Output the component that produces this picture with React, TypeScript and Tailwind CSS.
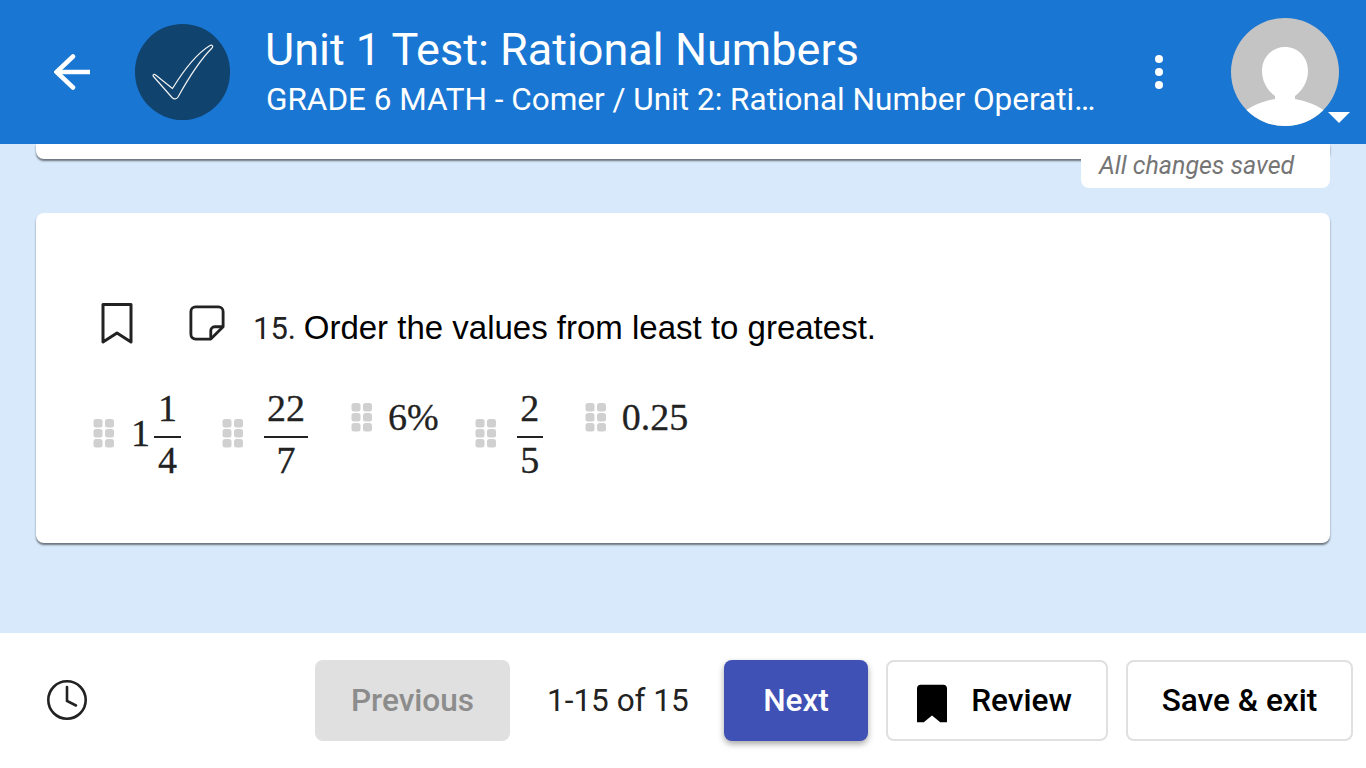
import { ReactNode } from 'react'

function Grip() {
  return (
    <svg width="22" height="29" viewBox="0 0 22 29" fill="#d0d0d0" className="shrink-0">
      <rect x="0.5" y="0" width="9" height="8.5" rx="2.5" />
      <rect x="12" y="0" width="9" height="8.5" rx="2.5" />
      <rect x="0.5" y="10" width="9" height="8.5" rx="2.5" />
      <rect x="12" y="10" width="9" height="8.5" rx="2.5" />
      <rect x="0.5" y="20" width="9" height="8.5" rx="2.5" />
      <rect x="12" y="20" width="9" height="8.5" rx="2.5" />
    </svg>
  )
}

function Fraction({ top, bottom, width }: { top: string; bottom: string; width: string }) {
  return (
    <span className={`flex h-[82px] flex-col items-center ${width}`}>
      <span className="h-[44px] leading-[32px]">{top}</span>
      <span className="h-[2px] w-full shrink-0 bg-[#222222]" />
      <span className="h-[36px] leading-[44px]">{bottom}</span>
    </span>
  )
}

function Option({ children, className }: { children: ReactNode; className: string }) {
  return <div className={`flex items-center ${className}`}>{children}</div>
}

function FooterButton({ children, className }: { children: ReactNode; className: string }) {
  return (
    <button className={`flex h-[81px] items-center justify-center rounded-[8px] text-[31.6px] font-medium ${className}`}>
      {children}
    </button>
  )
}

export default function App() {
  return (
    <div className="relative flex h-screen flex-col overflow-hidden bg-[#d7e9fb] font-['Roboto',sans-serif]">
      <header className="z-10 flex h-[144px] shrink-0 items-center bg-[#1976d2] text-white">
        <svg width="36" height="36" viewBox="0 0 36 36" fill="none" stroke="white" strokeWidth="4.5" className="ml-[54px] shrink-0">
          <path d="M36 18H4" />
          <path d="M19 2.500 2.500 18 19 33.500" strokeLinecap="round" />
        </svg>
        <div className="ml-[45px] flex h-[96px] w-[95px] shrink-0 items-center justify-center rounded-full bg-[#10436e]">
          <svg width="62" height="58" viewBox="0 0 62 58" fill="none" stroke="#f2f2f2" strokeWidth="1.2">
            <path d="M1.500 33.500c-1-1 0-2.800 1.500-2L20.500 45.500C30 30 44 11 58 2.500c2-1 3.500.5 2 2.500C47 18 36 36 26 54c-1.500 2.500-4 2.500-6 .5Z" strokeLinejoin="round" />
          </svg>
        </div>
        <div className="ml-[36px] w-[830px] shrink-0">
          <h1 className="-ml-[1px] text-[45px] leading-[50px]">Unit 1 Test: Rational Numbers</h1>
          <p className="mt-[5px] whitespace-nowrap text-[31.5px] leading-[40px]">GRADE 6 MATH - Comer / Unit 2: Rational Number Operati…</p>
        </div>
        <div className="ml-[59px] flex w-[13px] shrink-0 flex-col gap-[5px]">
          <span className="h-[8px] w-[8px] rounded-full bg-white" />
          <span className="h-[8px] w-[8px] rounded-full bg-white" />
          <span className="h-[8px] w-[8px] rounded-full bg-white" />
        </div>
        <div className="relative ml-[63px] h-[108px] w-[108px] shrink-0">
          <svg width="108" height="108" viewBox="0 0 108 108" className="rounded-full bg-[#c4c4c4]">
            <path d="M54 29c13 0 23 10 23 24 0 11-6 20-13 25v3c12 2 24 7 31 13a54 54 0 0 1-82 0c7-6 19-11 31-13v-3c-7-5-13-14-13-25 0-14 10-24 23-24Z" fill="white" />
          </svg>
          <span className="absolute left-[97px] top-[94px] h-0 w-0 border-x-[11px] border-t-[11px] border-x-transparent border-t-white" />
        </div>
      </header>

      <main className="flex-1 overflow-hidden px-[36px]">
        <div className="h-[15px] rounded-b-[8px] bg-white shadow-[0_2px_2px_rgba(0,0,0,0.5)]" />
        <section className="mt-[54px] h-[330px] rounded-[8px] bg-white px-[57px] pt-[90px] shadow-[0_2px_2px_rgba(0,0,0,0.5)]">
          <div className="flex h-[40px] items-center">
            <svg width="32" height="42" viewBox="0 0 32 42" fill="none" stroke="#222222" strokeWidth="3" strokeLinejoin="round" className="ml-[8px] shrink-0">
              <path d="M2 2.500h28V40L16 31 2 40Z" />
            </svg>
            <svg width="36" height="36" viewBox="0 0 38 38" fill="none" stroke="#222222" strokeWidth="3" strokeLinejoin="round" className="ml-[56px] shrink-0">
              <path d="M7 2h24a5 5 0 0 1 5 5v16L23 36H7a5 5 0 0 1-5-5V7a5 5 0 0 1 5-5Z" />
              <path d="M23 36V27a4 4 0 0 1 4-4h9" />
            </svg>
            <p className="ml-[28px] mt-[10px] whitespace-nowrap text-[31px] leading-[40px] text-[#222222]">
              15. <span className="font-['Liberation_Sans',sans-serif] text-[33px] text-black">Order the values from least to greatest.</span>
            </p>
          </div>
          <div className="mt-[49px] flex items-start font-['Liberation_Serif',serif] text-[38px] text-[#222222] [-webkit-text-stroke:0.3px_#222222]">
            <Option className="h-[82px]">
              <Grip />
              <span className="ml-[16px]">1</span>
              <span className="ml-[4px]">
                <Fraction top="1" bottom="4" width="w-[27px]" />
              </span>
            </Option>
            <Option className="ml-[41px] h-[82px]">
              <Grip />
              <span className="ml-[20px]">
                <Fraction top="22" bottom="7" width="w-[44px]" />
              </span>
            </Option>
            <Option className="ml-[43px] h-[50px]">
              <Grip />
              <span className="ml-[15px] leading-[48px]">6%</span>
            </Option>
            <Option className="ml-[36px] h-[82px]">
              <Grip />
              <span className="ml-[20px]">
                <Fraction top="2" bottom="5" width="w-[26px]" />
              </span>
            </Option>
            <Option className="ml-[42px] h-[50px]">
              <Grip />
              <span className="ml-[15px] leading-[48px]">0.25</span>
            </Option>
          </div>
        </section>
      </main>

      <div className="absolute left-[1081px] top-[144px] flex h-[44px] w-[249px] items-center rounded-b-[8px] bg-white pl-[18px] text-[25px] italic text-[#757575]">
        All changes saved
      </div>

      <footer className="flex h-[135px] shrink-0 items-center bg-white pl-[47px]">
        <svg width="40" height="40" viewBox="0 0 40 40" fill="none" stroke="#222222" strokeWidth="2.6" strokeLinecap="round" className="mb-[2px] mr-[1px] shrink-0">
          <circle cx="20" cy="20" r="18.700" />
          <path d="M20 7v14l9 4.500" />
        </svg>
        <FooterButton className="ml-[227px] w-[195px] bg-[#e0e0e0] text-[#8c8c8c]">Previous</FooterButton>
        <span className="ml-[37px] w-[141px] shrink-0 whitespace-nowrap text-[31.5px] text-[#222222]">1-15 of 15</span>
        <FooterButton className="ml-[36px] w-[144px] bg-[#3f51b5] text-white shadow-[0_3px_6px_rgba(0,0,0,0.35)]">Next</FooterButton>
        <FooterButton className="ml-[18px] w-[222px] gap-[24px] border-2 border-[#e0e0e0] bg-white pr-[5px] text-black">
          <svg width="30" height="39" viewBox="0 0 31 39" fill="black" className="mt-[6px] shrink-0">
            <path d="M4 0h23a4 4 0 0 1 4 4v35L24 39 15.500 32 7 39H0V4a4 4 0 0 1 4-4Z" />
          </svg>
          Review
        </FooterButton>
        <FooterButton className="ml-[18px] w-[227px] border-2 border-[#e0e0e0] bg-white text-black">Save &amp; exit</FooterButton>
      </footer>
    </div>
  )
}
